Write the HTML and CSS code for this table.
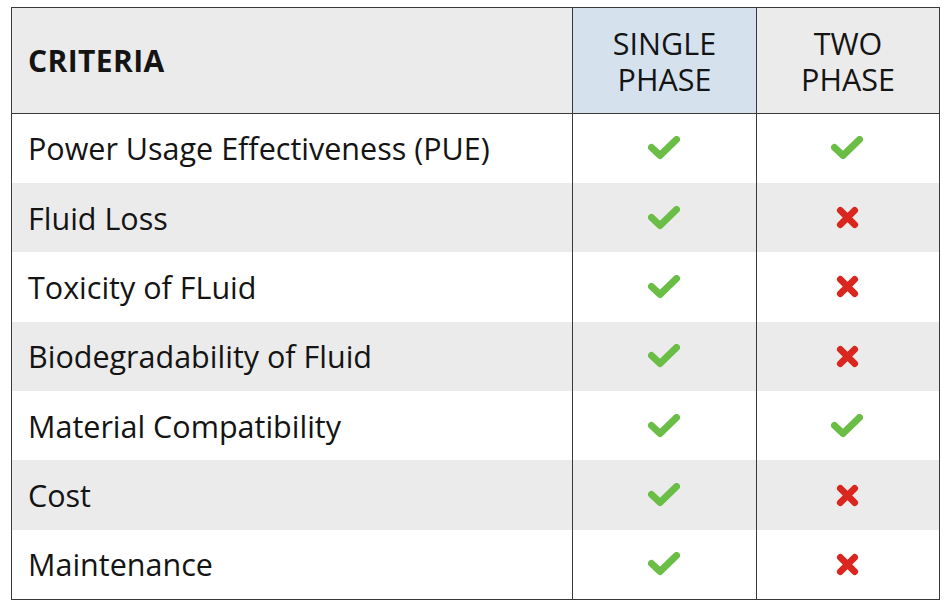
FILE: index.html
```html
<!DOCTYPE html>
<html>
<head>
<meta charset="utf-8">
<link rel="stylesheet" href="styles.css">
</head>
<body>
<svg width="0" height="0" class="defs">
  <defs>
    <symbol id="ok" viewBox="0 0 32 24"><polyline points="3.5,11.5 12,19.5 28.5,3.5" fill="none" stroke="#6abd45" stroke-width="7" stroke-linecap="round" stroke-linejoin="round"/></symbol>
    <symbol id="no" viewBox="0 0 24 24"><path d="M4.5 4.5L19.5 19.5M19.5 4.5L4.5 19.5" fill="none" stroke="#d9261f" stroke-width="7" stroke-linecap="round"/></symbol>
  </defs>
</svg>
<table class="cmp">
  <colgroup><col class="c1"><col class="c2"><col class="c3"></colgroup>
  <thead>
    <tr>
      <th class="crit">CRITERIA</th>
      <th class="phase single">SINGLE<br>PHASE</th>
      <th class="phase">TWO<br>PHASE</th>
    </tr>
  </thead>
  <tbody>
    <tr><td class="label">Power Usage Effectiveness (PUE)</td><td><svg class="ok"><use href="#ok"/></svg></td><td><svg class="ok"><use href="#ok"/></svg></td></tr>
    <tr class="alt"><td class="label">Fluid Loss</td><td><svg class="ok"><use href="#ok"/></svg></td><td><svg class="no"><use href="#no"/></svg></td></tr>
    <tr><td class="label">Toxicity of FLuid</td><td><svg class="ok"><use href="#ok"/></svg></td><td><svg class="no"><use href="#no"/></svg></td></tr>
    <tr class="alt"><td class="label">Biodegradability of Fluid</td><td><svg class="ok"><use href="#ok"/></svg></td><td><svg class="no"><use href="#no"/></svg></td></tr>
    <tr><td class="label">Material Compatibility</td><td><svg class="ok"><use href="#ok"/></svg></td><td><svg class="ok"><use href="#ok"/></svg></td></tr>
    <tr class="alt"><td class="label">Cost</td><td><svg class="ok"><use href="#ok"/></svg></td><td><svg class="no"><use href="#no"/></svg></td></tr>
    <tr><td class="label">Maintenance</td><td><svg class="ok"><use href="#ok"/></svg></td><td><svg class="no"><use href="#no"/></svg></td></tr>
  </tbody>
</table>
</body>
</html>
```

FILE: styles.css
```css
html, body {
  margin: 0;
  padding: 0;
  background: #ffffff;
}
body {
  font-family: "Open Sans", "Liberation Sans", sans-serif;
  color: #141414;
  padding: 7px 0 0 11px;
}
.defs {
  position: absolute;
  width: 0;
  height: 0;
}
.cmp {
  border-collapse: collapse;
  table-layout: fixed;
  width: 928px;
  border: 1.5px solid #3a3a3a;
}
.c1 { width: 561px; }
.c2 { width: 184px; }
.c3 { width: 183px; }
.cmp th, .cmp td {
  border-left: 1.5px solid #3a3a3a;
  padding: 0;
}
.cmp thead tr {
  height: 106px;
  background: #ebebeb;
}
.cmp thead th {
  border-bottom: 1.5px solid #3a3a3a;
}
.crit {
  text-align: left;
  font-weight: 700;
  font-size: 30px;
  padding-left: 16px !important;
  letter-spacing: 0.4px;
}
.phase {
  font-weight: 400;
  font-size: 30.5px;
  line-height: 36px;
  text-align: center;
}
.single {
  background: #d5e2ee;
}
.cmp tbody tr {
  height: 69.4px;
}
.cmp tbody tr.alt {
  background: #ebebeb;
}
.cmp td {
  text-align: center;
  vertical-align: middle;
}
.cmp td.label {
  text-align: left;
  font-size: 30.5px;
  padding-left: 16px;
}
.ok {
  width: 32px;
  height: 24px;
  display: block;
  margin: 0 auto;
  position: relative;
  left: -1px;
}
.no {
  width: 23px;
  height: 23px;
  display: block;
  margin: 0 auto;
  position: relative;
  left: -1px;
}
```
